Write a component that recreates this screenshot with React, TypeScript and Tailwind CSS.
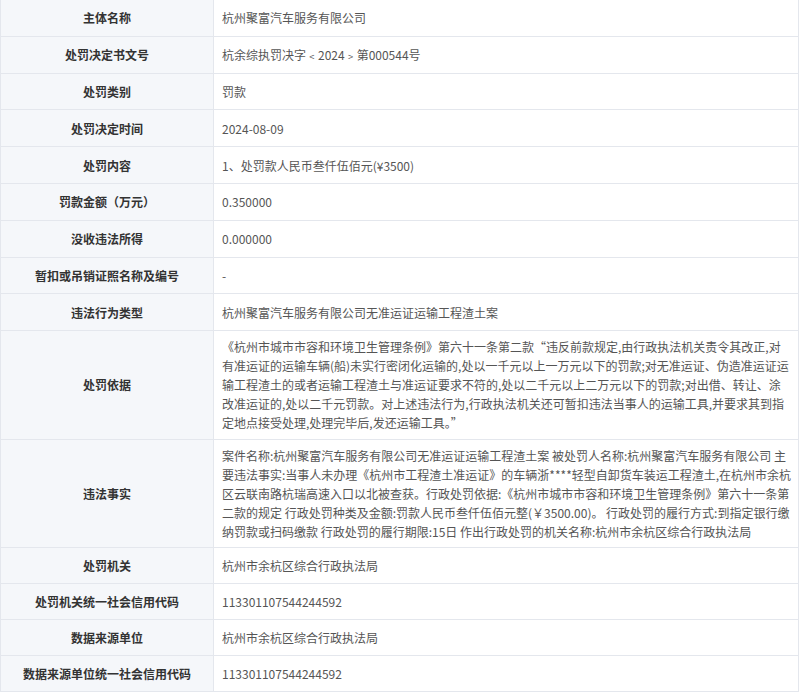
const rows: [string, string][] = [
  ["主体名称", "杭州聚富汽车服务有限公司"],
  ["处罚决定书文号", "杭余综执罚决字﹤2024﹥第000544号"],
  ["处罚类别", "罚款"],
  ["处罚决定时间", "2024-08-09"],
  ["处罚内容", "1、处罚款人民币叁仟伍佰元(¥3500)"],
  ["罚款金额（万元）", "0.350000"],
  ["没收违法所得", "0.000000"],
  ["暂扣或吊销证照名称及编号", "-"],
  ["违法行为类型", "杭州聚富汽车服务有限公司无准运证运输工程渣土案"],
  ["处罚依据", "《杭州市城市市容和环境卫生管理条例》第六十一条第二款“违反前款规定,由行政执法机关责令其改正,对有准运证的运输车辆(船)未实行密闭化运输的,处以一千元以上一万元以下的罚款;对无准运证、伪造准运证运输工程渣土的或者运输工程渣土与准运证要求不符的,处以二千元以上二万元以下的罚款;对出借、转让、涂改准运证的,处以二千元罚款。对上述违法行为,行政执法机关还可暂扣违法当事人的运输工具,并要求其到指定地点接受处理,处理完毕后,发还运输工具。”"],
  ["违法事实", "案件名称:杭州聚富汽车服务有限公司无准运证运输工程渣土案 被处罚人名称:杭州聚富汽车服务有限公司 主要违法事实:当事人未办理《杭州市工程渣土准运证》的车辆浙****轻型自卸货车装运工程渣土,在杭州市余杭区云联南路杭瑞高速入口以北被查获。行政处罚依据:《杭州市城市市容和环境卫生管理条例》第六十一条第二款的规定 行政处罚种类及金额:罚款人民币叁仟伍佰元整(￥3500.00)。 行政处罚的履行方式:到指定银行缴纳罚款或扫码缴款 行政处罚的履行期限:15日 作出行政处罚的机关名称:杭州市余杭区综合行政执法局"],
  ["处罚机关", "杭州市余杭区综合行政执法局"],
  ["处罚机关统一社会信用代码", "113301107544244592"],
  ["数据来源单位", "杭州市余杭区综合行政执法局"],
  ["数据来源单位统一社会信用代码", "113301107544244592"],
];

export default function App() {
  return (
    <div
      className="w-[800px] h-[692px] overflow-hidden bg-white text-[12px] text-[#555]"
      style={{ fontFamily: '"Microsoft YaHei","Noto Sans CJK SC",sans-serif' }}
    >
      <div className="border-l border-[#e4e7ed] w-[799px]">
        {rows.map(([k, v], i) => {
          const long = i === 9 || i === 10;
          const late = i > 10;
          return (
            <div
              key={i}
              className={
                "flex border-b border-[#e4e7ed] leading-[19px] " +
                (long ? "h-[108.5px]" : late ? "h-[36px]" : "h-[36.8px]")
              }
            >
              <div className="w-[213px] shrink-0 bg-[#f5f7fa] border-r border-[#e4e7ed] flex items-center justify-center font-bold text-[#333] px-2 text-center">
                {k}
              </div>
              <div className="flex-1 flex items-center pl-[8px] pr-[6px] border-r border-[#e4e7ed] break-all">
                <div>{v}</div>
              </div>
            </div>
          );
        })}
      </div>
    </div>
  );
}
